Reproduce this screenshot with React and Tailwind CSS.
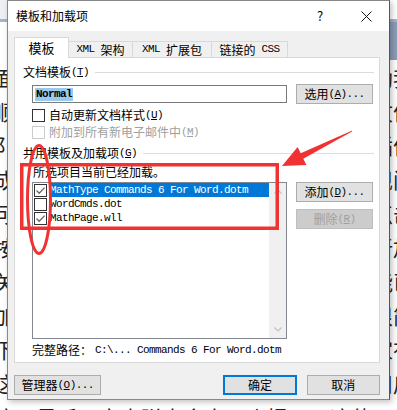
import React from 'react';

const sans = "font-['Noto_Sans_CJK_SC','Microsoft_YaHei',sans-serif]";
const mono = "font-['Liberation_Mono','Noto_Sans_CJK_SC',monospace] text-[11px] tracking-[-0.6px]";

function Key({ k, dots }) {
  return (
    <span className={mono}>
      (<u className="underline-offset-[1px]">{k}</u>){dots ? '...' : ''}
    </span>
  );
}

function Box({ checked, disabled }) {
  return (
    <span
      className={`w-[13px] h-[13px] border bg-white flex items-center justify-center shrink-0 ${
        disabled ? 'border-[#cccccc]' : 'border-[#333333]'
      }`}
    >
      {checked && (
        <svg width="11" height="11" viewBox="0 0 11 11">
          <path d="M1.5 5.5 L4.2 8.2 L9.6 2.6" stroke="#666" strokeWidth="1.3" fill="none" />
        </svg>
      )}
    </span>
  );
}

function Btn({ children, className = '', disabled, def }) {
  let look = 'bg-[#e1e1e1] border border-[#adadad] text-black';
  if (disabled) look = 'bg-[#cccccc] border border-[#bfbfbf] text-[#a0a0a0]';
  if (def) look = 'bg-[#e1e1e1] border-2 border-[#0078d7] text-black';
  return (
    <div className={`h-[20px] flex items-center justify-center text-[12px] ${look} ${className}`}>
      {children}
    </div>
  );
}

const docLines = [
  '面卡是文档中最常用的功能之一，可以帮助我们',
  '顺序排列内容。首先打开文档，然后点击文件选项',
  '阝分的设置可以在这里完成，也可以通过插件来完',
  '成，但是需要注意加载项的顺序，以免出现问题。',
  '可以在模板中找到对应的加载项，选择后点击确定',
  '按钮即可完成操作，如果出现错误可以重新加载。',
  '关闭文档后再次打开，就可以看到新的功能已经添',
  '加到工具栏中了，使用起来非常方便，也很简单。',
  '下面介绍一下具体的使用方法，希望对大家有帮助',
  '这。最后，文中弹出会出三个提示，这使用后即可',
  '这。最后，文中弹出会出三个提示，这使用后即可',
];

export default function App() {
  return (
    <div className={`relative w-[397px] h-[410px] overflow-hidden bg-white ${sans}`}>
      {/* Word document behind the dialog */}
      <div className="flex flex-col">
        <div className="h-[19px] flex">
          <div className="w-[8px] bg-[#eef0f3]" />
          <div className="flex-1 bg-white" />
        </div>
        <div className="h-[3px] bg-[#a5b4c9]" />
        <div className="h-[38px] flex">
          <div className="flex-1 bg-white" />
          <div className="w-[7px] bg-[#8a9cb8]" />
        </div>
        <div className="text-[21px] leading-[34px] text-[#222] whitespace-nowrap -ml-[6px]">
          {docLines.map((l, i) => (
            <div key={i}>{l}</div>
          ))}
        </div>
      </div>

      {/* dialog window */}
      <div className="absolute left-[7px] top-0 w-[383px] h-[400px] border border-[#888888] border-r-[#555555] bg-[#f0f0f0] flex flex-col shadow-[2px_2px_6px_rgba(0,0,0,0.25)]">
        <div className="h-[30px] bg-white flex items-center pl-[8px] text-[12px] text-black">
          <span>模板和加载项</span>
          <span className="ml-auto w-[46px] text-center text-[13px]">?</span>
          <span className="w-[46px] flex items-center justify-center">
            <svg width="11" height="11" viewBox="0 0 11 11">
              <path d="M0.5 0.5 L10.5 10.5 M10.5 0.5 L0.5 10.5" stroke="#111" strokeWidth="1" />
            </svg>
          </span>
        </div>

        <div className="flex flex-col pt-[6px] pl-[6px] pr-[9px]">
          {/* tabs */}
          <div className="flex items-end h-[21px] -mb-px relative z-10 text-[12px] text-black">
            <div className="w-[55px] h-[21px] bg-white border border-b-0 border-[#d9d9d9] flex items-center justify-center text-[13px]">
              模板
            </div>
            <div className="w-[64px] h-[17px] border border-l-0 border-[#d9d9d9] flex items-center justify-center">
              <span className={mono}>XML</span>
              <span className="ml-[6px]">架构</span>
            </div>
            <div className="w-[79px] h-[17px] border border-l-0 border-[#d9d9d9] flex items-center justify-center">
              <span className={mono}>XML</span>
              <span className="ml-[6px]">扩展包</span>
            </div>
            <div className="w-[76px] h-[17px] border border-l-0 border-[#d9d9d9] flex items-center justify-center">
              <span>链接的</span>
              <span className={`${mono} ml-[6px]`}>CSS</span>
            </div>
          </div>

          {/* panel */}
          <div className="w-[366px] h-[306px] bg-white border border-[#d9d9d9] flex flex-col pt-[6px] pl-[8px] pr-[5px] text-[12px] text-black">
            <div className="h-[16px] flex items-center">
              <span>文档模板</span>
              <Key k="T" />
              <div className="flex-1 h-px bg-[#dcdcdc] ml-[6px]" />
            </div>

            <div className="mt-[4px] h-[20px] flex items-center pl-[9px]">
              <div className="w-[255px] h-[18px] border border-[#7a7a7a] flex items-center pl-[2px]">
                <span className={`${mono} bg-[#99c9ef] h-[13px] leading-[13px] px-[1px] font-bold`}>Normal</span>
              </div>
              <Btn className="ml-[9px] w-[77px] h-[19px]">
                选用<Key k="A" dots />
              </Btn>
            </div>

            <div className="mt-[3px] h-[16px] flex items-center pl-[9px]">
              <Box />
              <span className="ml-[4px]">自动更新文档样式</span>
              <Key k="U" />
            </div>
            <div className="mt-[1px] h-[16px] flex items-center pl-[9px] text-[#a0a0a0]">
              <Box disabled />
              <span className="ml-[4px]">附加到所有新电子邮件中</span>
              <Key k="M" />
            </div>

            <div className="mt-[5px] h-[16px] flex items-center">
              <span>共用模板及加载项</span>
              <Key k="G" />
              <div className="flex-1 h-px bg-[#dcdcdc] ml-[6px]" />
            </div>

            <div className="mt-[3px] h-[16px] flex items-center pl-[10px]">所选项目当前已经加载。</div>

            <div className="mt-[2px] flex pl-[9px]">
              <div className="w-[255px] h-[157px] border border-[#828790] flex">
                <div className="flex-1 flex flex-col">
                  {[
                    ['MathType Commands 6 For Word.dotm', true, true],
                    ['WordCmds.dot', false, false],
                    ['MathPage.wll', true, false],
                  ].map(([name, checked, sel]) => (
                    <div key={name} className="h-[14px] flex items-center">
                      <span className="ml-[1px]">
                        <Box checked={checked} />
                      </span>
                      <span
                        className={`ml-[2px] flex-1 h-full flex items-center pl-[1px] ${mono} ${
                          sel ? 'bg-[#0078d7] text-white' : 'text-black'
                        }`}
                      >
                        {name}
                      </span>
                    </div>
                  ))}
                </div>
                <div className="w-[17px] bg-[#f0f0f0] flex flex-col justify-between">
                  <div className="h-[17px] flex items-center justify-center">
                    <svg width="8" height="5" viewBox="0 0 8 5">
                      <path d="M0.5 4.5 L4 1 L7.5 4.5" stroke="#c2c2c2" strokeWidth="1.2" fill="none" />
                    </svg>
                  </div>
                  <div className="h-[17px] flex items-center justify-center">
                    <svg width="8" height="5" viewBox="0 0 8 5">
                      <path d="M0.5 0.5 L4 4 L7.5 0.5" stroke="#c2c2c2" strokeWidth="1.2" fill="none" />
                    </svg>
                  </div>
                </div>
              </div>
              <div className="ml-[9px] flex flex-col gap-[7px]">
                <Btn className="w-[77px]">
                  添加<Key k="D" dots />
                </Btn>
                <Btn disabled className="w-[77px]">
                  删除<Key k="R" />
                </Btn>
              </div>
            </div>

            <div className="mt-[3px] h-[16px] flex items-center pl-[9px]">
              <span>完整路径：</span>
              <span className={`${mono} ml-[3px]`}>C:\... Commands 6 For Word.dotm</span>
            </div>
          </div>

          {/* footer */}
          <div className="mt-[12px] flex items-center">
            <Btn className="w-[88px] h-[19px]">
              管理器<Key k="O" dots />
            </Btn>
            <Btn def className="ml-[122px] w-[74px] h-[19px]">确定</Btn>
            <Btn className="ml-[10px] w-[74px] h-[19px]">取消</Btn>
          </div>
        </div>
      </div>

      {/* red annotations */}
      <svg className="absolute left-0 top-0 pointer-events-none" width="397" height="410" viewBox="0 0 397 410">
        <rect x="21.75" y="164.75" width="255.5" height="63.5" fill="none" stroke="#f03232" strokeWidth="3.5" />
        <ellipse cx="39" cy="199.5" rx="11.5" ry="54" fill="none" stroke="#f03232" strokeWidth="3" />
        <polygon
          points="282,166 297.6,147 300.7,153.3 352.2,130.4 352,131.6 303.3,158.7 306.4,165"
          fill="#f03232"
        />
      </svg>
    </div>
  );
}
